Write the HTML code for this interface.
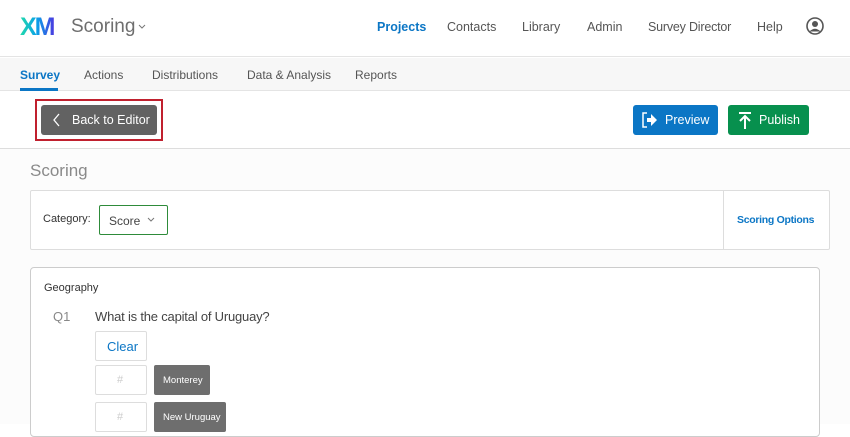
<!DOCTYPE html>
<html><head><style>
*{margin:0;padding:0;box-sizing:border-box}
body{width:850px;height:424px;overflow:hidden;font-family:"Liberation Sans",sans-serif;background:#fff;position:relative;color:#333}
.a{position:absolute;white-space:nowrap}
</style></head><body>
<div class="a" style="left:0;top:0;width:850px;height:57px;background:#fff;border-bottom:1px solid #e4e4e4"></div>
<div class="a" style="left:20px;top:13px;font-size:25px;font-weight:bold;letter-spacing:-2px;background:linear-gradient(90deg,#21dbaa,#0aa0e8,#4a3ae0);-webkit-background-clip:text;color:transparent">XM</div>
<div class="a" style="left:71px;top:16px;font-size:19px;color:#6e6e6e">Scoring</div>
<svg class="a" style="left:138px;top:24px" width="8" height="6"><path d="M1 1l3 3 3-3" fill="none" stroke="#777" stroke-width="1"/></svg>
<div class="a" style="left:377px;top:20px;font-size:12.5px;color:#0b76c5;font-weight:bold">Projects</div>
<div class="a" style="left:447px;top:20px;font-size:12.5px;color:#555">Contacts</div>
<div class="a" style="left:522px;top:20px;font-size:12.5px;color:#555">Library</div>
<div class="a" style="left:587px;top:20px;font-size:12.5px;color:#555">Admin</div>
<div class="a" style="left:648px;top:20px;font-size:12.5px;color:#555;letter-spacing:-0.2px">Survey Director</div>
<div class="a" style="left:757px;top:20px;font-size:12.5px;color:#555">Help</div>
<svg class="a" style="left:806px;top:17px" width="18" height="18" viewBox="0 0 18 18"><circle cx="9" cy="9" r="8" fill="none" stroke="#555" stroke-width="1.6"/><circle cx="9" cy="7" r="3" fill="#555"/><path d="M3.5 14.5Q9 9 14.5 14.5" fill="#555"/></svg>
<div class="a" style="left:0;top:58px;width:850px;height:33px;background:#f7f7f7;border-bottom:1px solid #e4e4e4"></div>
<div class="a" style="left:20px;top:68px;font-size:12px;color:#0b76c5;font-weight:bold">Survey</div>
<div class="a" style="left:20px;top:88px;width:38px;height:3px;background:#0b76c5"></div>
<div class="a" style="left:84px;top:68px;font-size:12px;color:#555">Actions</div>
<div class="a" style="left:152px;top:68px;font-size:12px;color:#555">Distributions</div>
<div class="a" style="left:247px;top:68px;font-size:12px;color:#555">Data &amp; Analysis</div>
<div class="a" style="left:355px;top:68px;font-size:12px;color:#555">Reports</div>
<div class="a" style="left:35px;top:99px;width:128px;height:42px;border:2px solid #c0202e"></div>
<div class="a" style="left:41px;top:105px;width:116px;height:30px;background:#626262;border-radius:3px;color:#fff;font-size:12.5px;padding:8px 0 0 31px">Back to Editor</div>
<svg class="a" style="left:53px;top:113px" width="8" height="14"><path d="M6 1L1 7l5 6" fill="none" stroke="#fff" stroke-width="1.3"/></svg>
<div class="a" style="left:633px;top:105px;width:85px;height:30px;background:#0b76c5;border-radius:3px;color:#fff;font-size:12.5px;padding:8px 0 0 32px">Preview</div>
<svg class="a" style="left:642px;top:112px" width="16" height="16"><path d="M5 1H1v14h4" fill="none" stroke="#fff" stroke-width="1.5"/><path d="M5 6h4V2l6 6-6 6v-4H5z" fill="#fff"/></svg>
<div class="a" style="left:728px;top:105px;width:81px;height:30px;background:#07904e;border-radius:3px;color:#fff;font-size:12.5px;padding:8px 0 0 31px">Publish</div>
<svg class="a" style="left:738px;top:112px" width="14" height="18"><path d="M1 1h12M7 4v13M2 9l5-5 5 5" fill="none" stroke="#fff" stroke-width="2"/></svg>
<div class="a" style="left:0;top:148px;width:850px;height:276px;background:#fcfcfc;border-top:1px solid #ddd"></div>
<div class="a" style="left:30px;top:161px;font-size:17px;color:#8a8a8a">Scoring</div>
<div class="a" style="left:30px;top:190px;width:800px;height:60px;background:#fff;border:1px solid #ddd;border-radius:2px"></div>
<div class="a" style="left:723px;top:191px;width:1px;height:58px;background:#ddd"></div>
<div class="a" style="left:43px;top:213px;font-size:11px;color:#333">Category:</div>
<div class="a" style="left:99px;top:205px;width:69px;height:30px;border:1px solid #2e8b3a;border-radius:2px;font-size:12px;color:#444;padding:8px 0 0 9px">Score</div>
<svg class="a" style="left:147px;top:217px" width="8" height="6"><path d="M1 1l3 3 3-3" fill="none" stroke="#777" stroke-width="1"/></svg>
<div class="a" style="left:737px;top:214px;font-size:10.5px;color:#0b76c5;font-weight:bold;letter-spacing:-0.3px">Scoring Options</div>
<div class="a" style="left:30px;top:267px;width:790px;height:170px;background:#fff;border:1px solid #ccc;border-radius:4px"></div>
<div class="a" style="left:44px;top:282px;font-size:11px;color:#333">Geography</div>
<div class="a" style="left:53px;top:309px;font-size:13px;color:#888">Q1</div>
<div class="a" style="left:95px;top:309px;font-size:13px;color:#444;letter-spacing:-0.2px">What is the capital of Uruguay?</div>
<div class="a" style="left:95px;top:331px;width:52px;height:30px;border:1px solid #ddd;border-radius:2px;color:#0b76c5;font-size:13px;padding:7px 0 0 11px">Clear</div>
<div class="a" style="left:95px;top:365px;width:52px;height:30px;border:1px solid #ddd;border-radius:2px;color:#ccc;font-size:11px;padding:8px 0 0 21px">#</div>
<div class="a" style="left:154px;top:365px;width:56px;height:30px;background:#6e6e6e;border-radius:2px;color:#fff;font-size:9.5px;padding:10px 0 0 9px">Monterey</div>
<div class="a" style="left:95px;top:402px;width:52px;height:30px;border:1px solid #ddd;border-radius:2px;color:#ccc;font-size:11px;padding:8px 0 0 21px">#</div>
<div class="a" style="left:154px;top:402px;width:72px;height:30px;background:#6e6e6e;border-radius:2px;color:#fff;font-size:9.5px;padding:10px 0 0 9px">New Uruguay</div>
</body></html>
